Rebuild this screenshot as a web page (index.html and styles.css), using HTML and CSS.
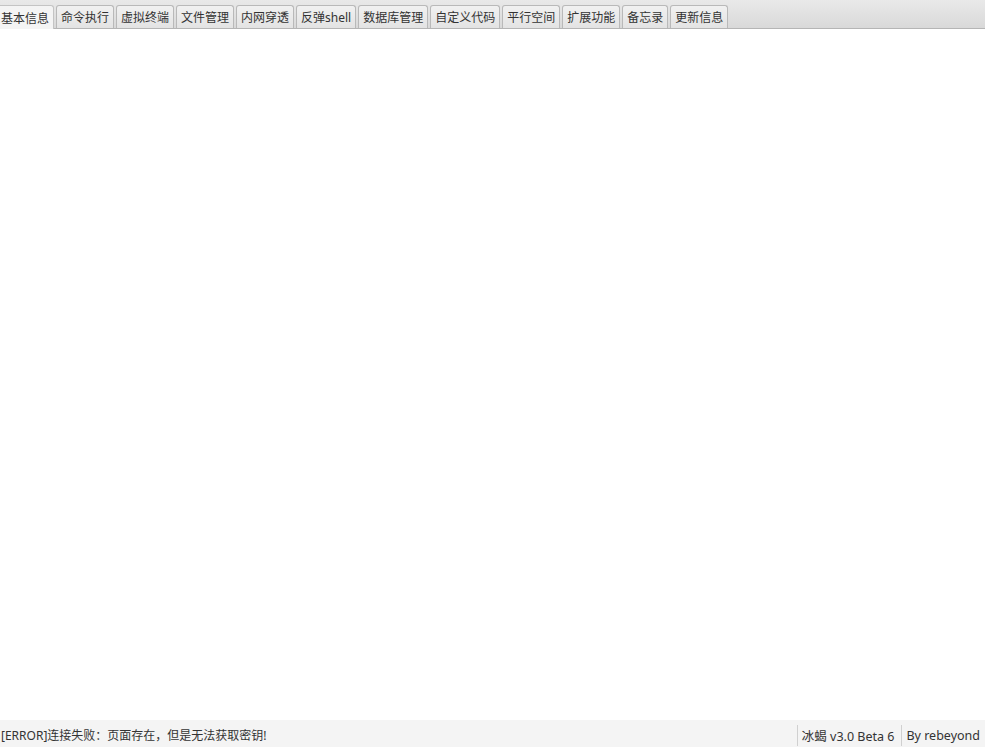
FILE: index.html
```html
<!DOCTYPE html>
<html lang="zh-CN">
<head>
<meta charset="utf-8">
<title>冰蝎 v3.0 Beta 6</title>
<link rel="stylesheet" href="styles.css">
</head>
<body>
<div class="app">
  <div class="tabbar">
    <div class="tab selected">基本信息</div>
    <div class="tab">命令执行</div>
    <div class="tab">虚拟终端</div>
    <div class="tab">文件管理</div>
    <div class="tab">内网穿透</div>
    <div class="tab">反弹shell</div>
    <div class="tab">数据库管理</div>
    <div class="tab">自定义代码</div>
    <div class="tab">平行空间</div>
    <div class="tab">扩展功能</div>
    <div class="tab">备忘录</div>
    <div class="tab">更新信息</div>
  </div>
  <div class="content"></div>
  <div class="statusbar">
    <div class="status-msg">[ERROR]连接失败：页面存在，但是无法获取密钥!</div>
    <div class="status-cell ver">冰蝎 v3.0 Beta 6</div>
    <div class="status-cell author">By rebeyond</div>
  </div>
</div>
</body>
</html>
```
FILE: styles.css
```css
html, body {
  margin: 0;
  padding: 0;
  height: 100%;
  background: #ffffff;
}
body {
  font-family: "Noto Sans", "Noto Sans CJK SC", sans-serif;
  font-size: 12px;
  color: #2a2a2a;
}
.app {
  display: flex;
  flex-direction: column;
  height: 747px;
  width: 985px;
}
.tabbar {
  display: flex;
  align-items: flex-end;
  gap: 2px;
  height: 29px;
  box-sizing: border-box;
  padding-top: 5px;
  background: linear-gradient(#e9e9e9, #d9d9d9);
  border-bottom: 1px solid #b5b5b5;
  flex: none;
}
.tab {
  height: 23px;
  box-sizing: border-box;
  padding: 0 4px;
  display: flex;
  align-items: center;
  border: 1px solid #b9b9b9;
  border-bottom: none;
  border-radius: 3px 3px 0 0;
  background: linear-gradient(#f1f1f1, #e3e3e3);
  font-family: "Noto Sans", "Noto Sans CJK SC", sans-serif;
  font-size: 12px;
  color: #333333;
  white-space: nowrap;
  flex: none;
}
.tab.selected {
  background: #f4f4f4;
  height: 24px;
  margin-bottom: -1px;
  border-color: #c4c4c4;
  border-left: none;
  padding-left: 1px;
  border-radius: 0 3px 0 0;
}
.content {
  flex: 1;
  background: #ffffff;
}
.statusbar {
  flex: none;
  height: 27px;
  background: #f4f4f4;
  display: flex;
  align-items: center;
  font-family: "Noto Sans", "Noto Sans CJK SC", sans-serif;
  font-size: 12px;
  color: #333333;
}
.status-msg {
  flex: 1;
  padding-left: 1px;
  padding-top: 2px;
  white-space: nowrap;
}
.status-cell {
  flex: none;
  white-space: nowrap;
  border-left: 1px solid #d0d0d0;
  height: 21px;
  margin-top: 4px;
  display: flex;
  align-items: center;
  font-size: 12.5px;
  padding: 0 7px 0 4px;
}
.author {
  padding-right: 5px;
}
```
